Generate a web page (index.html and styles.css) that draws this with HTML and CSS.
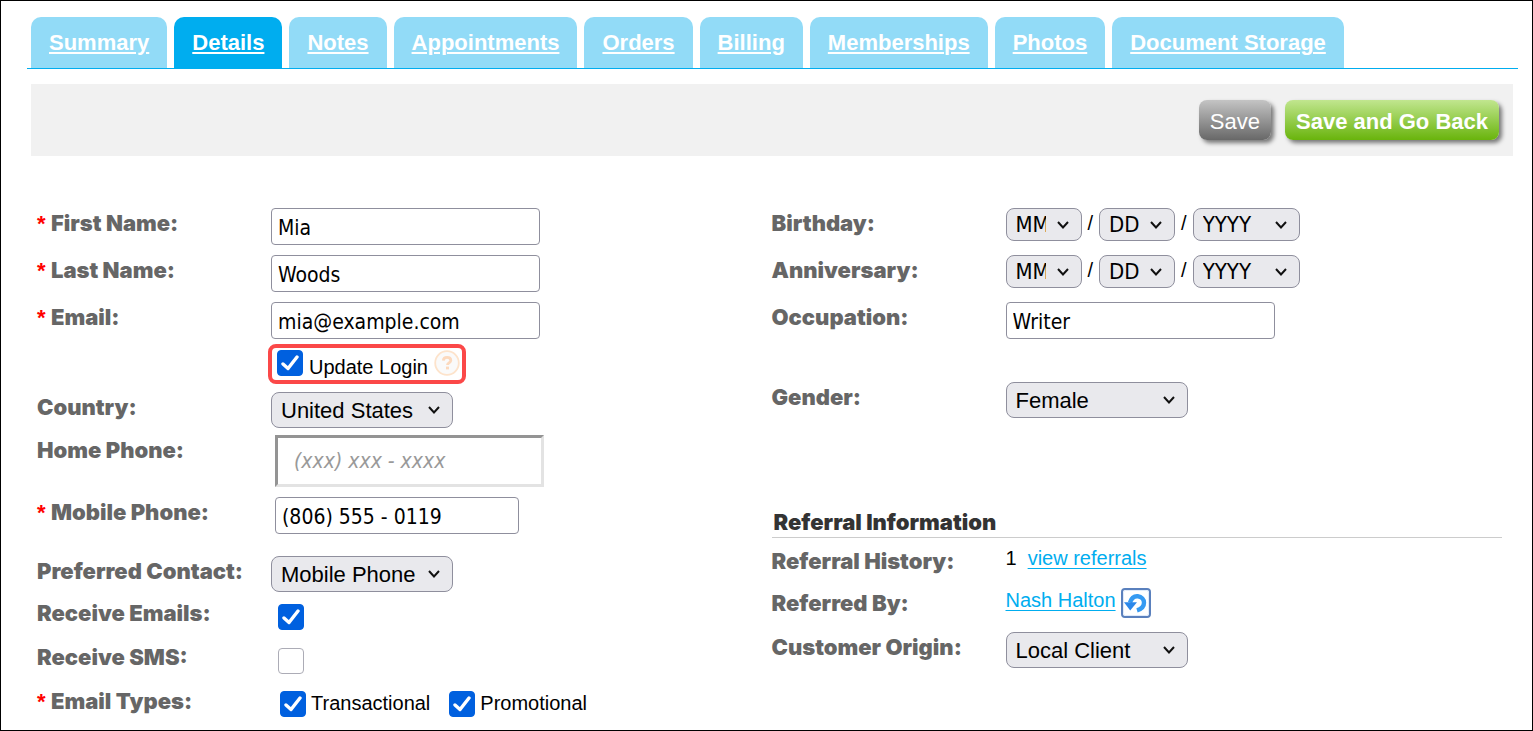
FILE: index.html
```html
<!DOCTYPE html>
<html lang="en">
<head>
<meta charset="utf-8">
<meta name="viewport" content="width=device-width, initial-scale=1">
<title>Customer Details</title>
<link rel="stylesheet" href="styles.css">
</head>
<body>
<nav class="tabs">
  <a class="tab" href="#summary">Summary</a>
  <a class="tab tab-active" href="#details">Details</a>
  <a class="tab" href="#notes">Notes</a>
  <a class="tab" href="#appointments">Appointments</a>
  <a class="tab" href="#orders">Orders</a>
  <a class="tab" href="#billing">Billing</a>
  <a class="tab" href="#memberships">Memberships</a>
  <a class="tab" href="#photos">Photos</a>
  <a class="tab" href="#documents">Document Storage</a>
</nav>
<form>
  <div class="toolbar">
    <button class="btn btn-gray" type="button">Save</button>
    <button class="btn btn-green" type="submit">Save and Go Back</button>
  </div>
  <div class="columns">
    <div class="column">
      <div class="row">
        <label class="name" for="first"><span class="req">*</span> First Name:</label>
        <input class="text" id="first" type="text" value="Mia">
      </div>
      <div class="row">
        <label class="name" for="last"><span class="req">*</span> Last Name:</label>
        <input class="text" id="last" type="text" value="Woods">
      </div>
      <div class="row row-email">
        <label class="name" for="email"><span class="req">*</span> Email:</label>
        <div>
          <input class="text" id="email" type="text" value="mia@example.com">
          <div class="login">
            <input class="check" id="login" type="checkbox" checked>
            <label for="login">Update Login</label>
            <svg class="help" viewBox="0 0 26 26" aria-hidden="true">
              <circle cx="13" cy="13" r="11.8" fill="#fafafa" stroke="#fde3cb" stroke-width="1.8"/>
              <path d="M9.3 10.6C9.5 8.4 11 7.4 13 7.4c2.2 0 3.8 1.2 3.8 3 0 2.4-3.3 2.4-3.3 4.6" fill="none" stroke="#fcd9bd" stroke-width="2.8"/>
              <path d="M12 16.6h3v2.8h-3z" fill="#fcd9bd"/>
            </svg>
          </div>
        </div>
      </div>
      <div class="row row-country">
        <label class="name" for="country">Country:</label>
        <select class="select" id="country"><option>United States</option></select>
      </div>
      <div class="row">
        <label class="name" for="home">Home Phone:</label>
        <input class="text phone-empty" id="home" type="text" placeholder="(xxx) xxx - xxxx">
      </div>
      <div class="row row-mobile">
        <label class="name" for="mobile"><span class="req">*</span> Mobile Phone:</label>
        <input class="text phone" id="mobile" type="text" value="(806) 555 - 0119">
      </div>
      <div class="row row-contact">
        <label class="name" for="contact">Preferred Contact:</label>
        <select class="select" id="contact"><option>Mobile Phone</option></select>
      </div>
      <div class="row row-check">
        <label class="name" for="emails">Receive Emails:</label>
        <input class="check" id="emails" type="checkbox" checked>
      </div>
      <div class="row row-check">
        <label class="name" for="sms">Receive SMS:</label>
        <input class="check" id="sms" type="checkbox">
      </div>
      <div class="row row-types" role="group" aria-labelledby="types">
        <span class="name" id="types"><span class="req">*</span> Email Types:</span>
        <div class="choices">
          <span class="choice"><input class="check" id="transactional" type="checkbox" checked><label for="transactional">Transactional</label></span>
          <span class="choice"><input class="check" id="promotional" type="checkbox" checked><label for="promotional">Promotional</label></span>
        </div>
      </div>
    </div>
    <div class="column">
      <div class="row row-date" role="group" aria-labelledby="birthday">
        <span class="name" id="birthday">Birthday:</span>
        <div class="date">
          <select class="select part" aria-label="Birthday month"><option>MM</option></select>
          <span>/</span>
          <select class="select part" aria-label="Birthday day"><option>DD</option></select>
          <span>/</span>
          <select class="select part part-year" aria-label="Birthday year"><option>YYYY</option></select>
        </div>
      </div>
      <div class="row row-date" role="group" aria-labelledby="anniversary">
        <span class="name" id="anniversary">Anniversary:</span>
        <div class="date">
          <select class="select part" aria-label="Anniversary month"><option>MM</option></select>
          <span>/</span>
          <select class="select part" aria-label="Anniversary day"><option>DD</option></select>
          <span>/</span>
          <select class="select part part-year" aria-label="Anniversary year"><option>YYYY</option></select>
        </div>
      </div>
      <div class="row row-occupation">
        <label class="name" for="occupation">Occupation:</label>
        <input class="text" id="occupation" type="text" value="Writer">
      </div>
      <div class="row">
        <label class="name" for="gender">Gender:</label>
        <select class="select" id="gender"><option>Female</option></select>
      </div>
      <section class="referral">
        <h2 class="heading">Referral Information</h2>
        <div class="row row-link">
          <span class="name">Referral History:</span>
          <div class="links"><span>1</span><a href="#referrals">view referrals</a></div>
        </div>
        <div class="row row-by">
          <span class="name">Referred By:</span>
          <div class="links links-by">
            <a href="#nash">Nash Halton</a>
            <button class="reset" type="button" aria-label="Reset referrer">
              <svg viewBox="0 0 30 30" aria-hidden="true">
                <rect x="1" y="1" width="28" height="28" rx="3" fill="#fff" stroke="#5a80bd" stroke-width="2"/>
                <rect x="2.500" y="2.500" width="25" height="25" rx="2" fill="none" stroke="#dfeafa"/>
                <path d="M9 14.500C10.500 9.800 13.500 8 16.800 8.300c3.900.4 6.200 3.200 6.200 6.400 0 3.700-2.600 6.300-7 7.600" fill="none" stroke="#359af2" stroke-width="4.400"/>
                <path d="M3 14.300h13L9.200 22.600z" fill="#2c88ea"/>
              </svg>
            </button>
          </div>
        </div>
        <div class="row">
          <label class="name" for="origin">Customer Origin:</label>
          <select class="select" id="origin"><option>Local Client</option></select>
        </div>
      </section>
    </div>
  </div>
</form>
</body>
</html>
```

FILE: styles.css
```css
* {
  box-sizing: border-box;
}

body {
  margin: 0;
  min-height: 100vh;
  border: 1px solid #000;
  background: #fff;
  color: #000;
  font: 20px/30px "Liberation Sans", Arial, sans-serif;
}

a {
  color: #00adef;
  text-underline-offset: 3px;
  text-decoration-thickness: 1px;
}

.tabs {
  display: flex;
  gap: 7px;
  margin: 16px 14px 15px 26px;
  padding-left: 4px;
  border-bottom: 1px solid #00adef;
}

.tab {
  padding: 11px 18px 10px;
  border-radius: 10px 10px 0 0;
  background: #92dbf7;
  color: #fff;
  font-size: 22px;
  font-weight: bold;
  text-underline-offset: 2px;
  text-decoration-thickness: 2px;
}

.tab-active {
  background: #00adef;
}

.toolbar {
  display: flex;
  justify-content: flex-end;
  gap: 14px;
  margin: 0 19px 0 30px;
  padding: 16px 14px 16px 15px;
  background: #f1f1f1;
}

.btn {
  height: 40px;
  padding: 3px 11px 0;
  border: 0;
  border-radius: 8px;
  color: #fff;
  font: 22px/30px "Liberation Sans", Arial, sans-serif;
  box-shadow: 3px 3px 4px rgba(0, 0, 0, 0.5);
}

.btn-gray {
  background: linear-gradient(#c4c4c4, #686868);
}

.btn-green {
  background: linear-gradient(#c1e68f, #69b40c);
  font-weight: bold;
}

.columns {
  display: grid;
  grid-template-columns: 1fr 1fr;
  padding: 52px 26px 0 36px;
}

.row {
  display: grid;
  grid-template-columns: 234px 1fr;
  align-items: start;
  justify-items: start;
  margin-bottom: 10px;
}

.name {
  color: #666;
  font-family: Inter, "Arial Black", sans-serif;
  font-size: 22px;
  font-weight: 900;
  white-space: nowrap;
}

.req {
  margin-right: 1px;
  color: #f00;
  font-family: "Liberation Sans", Arial, sans-serif;
  font-weight: bold;
}

.text {
  display: block;
  width: 269px;
  height: 37px;
  padding: 2px 6px 0;
  border: 1px solid #8f8f9d;
  border-radius: 4px;
  background: #fff;
  color: #000;
  font: 21px/30px "DejaVu Sans Condensed", "Noto Sans", sans-serif;
}

.phone {
  width: 244px;
  margin-left: 4px;
}

.phone-empty {
  height: 52px;
  margin-left: 4px;
  padding: 0 16px;
  border: 3px solid;
  border-color: #949494 #e3e3e3 #e3e3e3 #949494;
  border-radius: 0;
}

.phone-empty::placeholder {
  color: #999;
  font-style: italic;
}

.select {
  appearance: none;
  width: 182px;
  height: 36px;
  padding: 1px 36px 0 9px;
  border: 1px solid #8f8f9d;
  border-radius: 8px;
  background: #e9e9ed url("data:image/svg+xml,%3Csvg xmlns='http://www.w3.org/2000/svg' width='12' height='8'%3E%3Cpath d='M1 1l5 5.500 5-5.500' fill='none' stroke='%23111' stroke-width='2'/%3E%3C/svg%3E") no-repeat right 12px center;
  color: #000;
  font: 22px/30px "Liberation Sans", Arial, sans-serif;
}

.part {
  width: 76px;
  height: 33px;
  padding: 0 35px 0 9px;
  font-family: "DejaVu Sans Condensed", "Noto Sans", sans-serif;
}

.part-year {
  width: 107px;
}

.date {
  display: flex;
  gap: 6px;
}

.check {
  appearance: none;
  flex: none;
  width: 26px;
  height: 26px;
  margin: 0;
  border: 1px solid #acacb6;
  border-radius: 4px;
  background: #fff;
}

.check:checked {
  border-color: #0060df;
  background: #0060df url("data:image/svg+xml,%3Csvg xmlns='http://www.w3.org/2000/svg' width='18' height='16'%3E%3Cpath d='M2 9l5 4.500L16 2' fill='none' stroke='white' stroke-width='3.400' stroke-linecap='round' stroke-linejoin='round'/%3E%3C/svg%3E") no-repeat center;
}

.row-email {
  margin-bottom: 8px;
}

.login {
  display: flex;
  align-items: center;
  gap: 6px;
  width: max-content;
  height: 40px;
  margin: 5px 0 0 -3px;
  padding: 0 2px 2px 5px;
  border: 4px solid #fb4848;
  border-radius: 8px;
}

.login label {
  padding-top: 8px;
}

.help {
  width: 26px;
  height: 26px;
}

.row-country {
  margin-bottom: 7px;
}

.row-mobile {
  margin-bottom: 22px;
}

.row-contact {
  margin-bottom: 6px;
}

.row-check {
  margin-bottom: 12px;
}

.row-check .check {
  margin: 6px 0 0 7px;
}

.row-types {
  margin-bottom: 0;
}

.choices,
.choice {
  display: flex;
}

.choices {
  gap: 19px;
  padding-left: 9px;
}

.choice {
  gap: 5px;
}

.choice .check {
  margin-top: 5px;
}

.choice label {
  padding-top: 2px;
}

.row-date {
  margin-bottom: 14px;
}

.row-occupation {
  margin-bottom: 43px;
}

.referral {
  margin: 89px 4px 0 0;
}

.heading {
  margin: 0 0 8px;
  padding-left: 2px;
  border-bottom: 1px solid #ccc;
  color: #333;
  font: 900 22px/30px Inter, "Arial Black", sans-serif;
}

.row-link {
  margin-bottom: 12px;
}

.row-by {
  margin-bottom: 14px;
}

.links {
  display: flex;
  gap: 11px;
  height: 30px;
  line-height: 24px;
}

.links-by {
  gap: 5px;
}

.reset {
  width: 30px;
  height: 30px;
  padding: 0;
  border: 0;
  background: none;
}

.reset svg {
  display: block;
}
```
